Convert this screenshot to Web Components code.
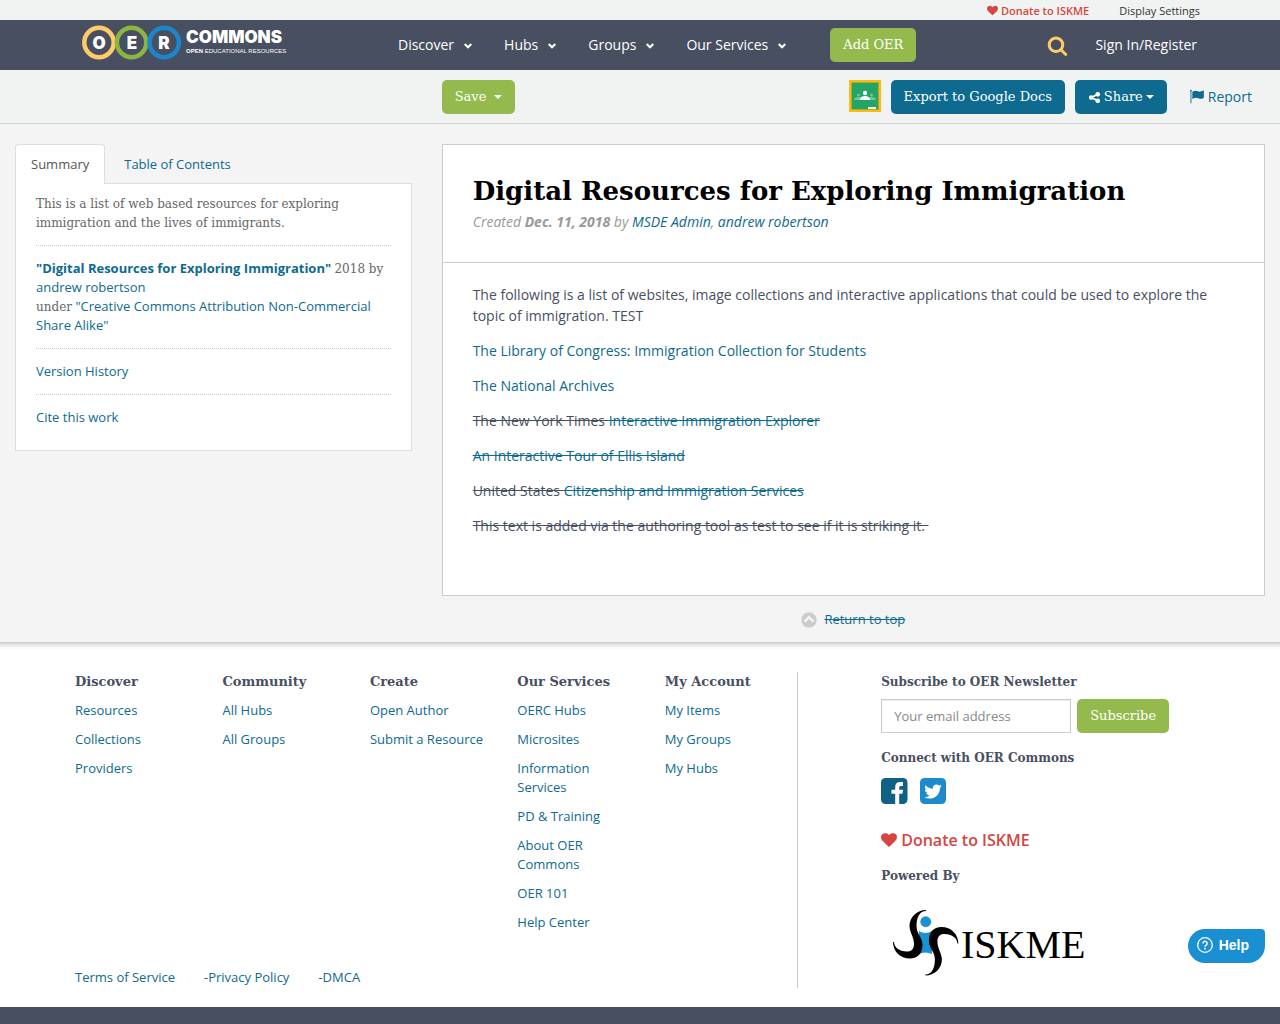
<!DOCTYPE html>
<html lang="en">
<head>
<meta charset="utf-8">
<meta name="viewport" content="width=device-width, initial-scale=1">
<title>Digital Resources for Exploring Immigration | OER Commons</title>
<style>
  :root {
    --slab: "DejaVu Serif", serif;
    --link: #0e6a8e;
    --navy: #484f60;
    --green: #94ba4d;
    --blue: #0e6a8e;
    --red: #d64541;
  }
  body {
    margin: 0;
    min-height: 100vh;
    display: flex;
    flex-direction: column;
    background: #f4f4f4;
    color: var(--navy);
    font: 13px/19px "Open Sans", sans-serif;
  }
  a {
    color: var(--link);
    text-decoration: none;
  }
  main {
    display: grid;
    grid-template-columns: 1fr 2fr;
    align-items: start;
    padding-top: 20px;
  }
  oer-summary {
    margin: 0 15px;
  }
  .content {
    margin: 0 15px;
    padding-bottom: 13px;
  }
  .serif {
    font: 12px/14px var(--slab);
  }
  del {
    text-decoration: line-through;
  }
</style>
</head>
<body>
<oer-topbar></oer-topbar>
<oer-navbar></oer-navbar>
<oer-actions></oer-actions>

<main>
  <oer-summary>
    <oer-summary-item><span class="serif">This is a list of web based resources for exploring immigration and the lives of immigrants.</span></oer-summary-item>
    <oer-summary-item>
      <a href="#"><b>"Digital Resources for Exploring Immigration"</b></a> <span class="serif">2018 by</span><br>
      <a href="#">andrew robertson</a><br>
      <span class="serif">under</span> <a href="#">"Creative Commons Attribution Non-Commercial Share Alike"</a>
    </oer-summary-item>
    <oer-summary-item><a href="#">Version History</a></oer-summary-item>
    <oer-summary-item><a href="#">Cite this work</a></oer-summary-item>
  </oer-summary>

  <div class="content">
    <oer-article>
      <span slot="title">Digital Resources for Exploring Immigration</span>
      <span slot="meta">Created <b>Dec. 11, 2018</b> by <a href="#">MSDE Admin</a>, <a href="#">andrew robertson</a></span>
      <p>The following is a list of websites, image collections and interactive applications that could be used to explore the topic of immigration. TEST</p>
      <p><a href="#">The Library of Congress: Immigration Collection for Students</a></p>
      <p><a href="#">The National Archives</a></p>
      <p><del>The New York Times <a href="#"><del>Interactive Immigration Explorer</del></a></del></p>
      <p><a href="#"><del>An Interactive Tour of Ellis Island</del></a></p>
      <p><del>United States <a href="#"><del>Citizenship and Immigration Services</del></a></del></p>
      <p><del>This text is added via the authoring tool as test to see if it is striking it.&nbsp;</del></p>
    </oer-article>
    <oer-return-top></oer-return-top>
  </div>
</main>

<oer-footer>
  <oer-link-column heading="Discover">
    <a href="#">Resources</a><a href="#">Collections</a><a href="#">Providers</a>
  </oer-link-column>
  <oer-link-column heading="Community">
    <a href="#">All Hubs</a><a href="#">All Groups</a>
  </oer-link-column>
  <oer-link-column heading="Create">
    <a href="#">Open Author</a><a href="#">Submit a Resource</a>
  </oer-link-column>
  <oer-link-column heading="Our Services">
    <a href="#">OERC Hubs</a><a href="#">Microsites</a><a href="#">Information Services</a><a href="#">PD &amp; Training</a><a href="#">About OER Commons</a><a href="#">OER 101</a><a href="#">Help Center</a>
  </oer-link-column>
  <oer-link-column heading="My Account">
    <a href="#">My Items</a><a href="#">My Groups</a><a href="#">My Hubs</a>
  </oer-link-column>
  <oer-newsletter slot="side"></oer-newsletter>
</oer-footer>
<oer-help></oer-help>

<script>
const base = `
  * { box-sizing: border-box; }
  :host { display: block; }
  a { color: var(--link); text-decoration: none; }
  svg { display: block; flex: none; }
  button { font: 13px/20px var(--slab); color: #fff; border: 0; border-radius: 5px; cursor: pointer; }
`

const icons = {
  heart: '<path d="M896 1664q-26 0-44-18l-624-602q-10-8-27.5-26T145 952.5 77 855 23.5 734 0 596q0-220 127-344t351-124q62 0 126.5 21.5t120 58T820 276t76 68q36-36 76-68t95.5-68.5 120-58T1314 128q224 0 351 124t127 344q0 221-229 450l-623 600q-18 18-44 18z"/>',
  search: '<path d="M1216 832q0-185-131.5-316.5T768 384 451.5 515.5 320 832t131.5 316.5T768 1280t316.5-131.5T1216 832zm512 832q0 52-38 90t-90 38q-54 0-90-38l-343-342q-179 124-399 124-143 0-273.5-55.5t-225-150-150-225T64 832t55.5-273.5 150-225 225-150T768 128t273.5 55.5 225 150 150 225T1472 832q0 220-124 399l343 343q37 37 37 90z"/>',
  share: '<path d="M1344 1024q133 0 226.5 93.5t93.5 226.5-93.5 226.5-226.5 93.5-226.5-93.5-93.5-226.5q0-12 2-34l-360-180q-92 86-218 86-133 0-226.5-93.5t-93.5-226.5 93.5-226.5 226.5-93.5q126 0 218 86l360-180q-2-22-2-34 0-133 93.5-226.5t226.5-93.5 226.5 93.5 93.5 226.5-93.5 226.5-226.5 93.5q-126 0-218-86l-360 180q2 22 2 34t-2 34l360 180q92-86 218-86z"/>',
  flag: '<path d="M0 190a110 110 0 0 1 220 0q0 65-52 95v1400q0 43-55 43t-55-43V285Q0 255 0 190zM280 330q180-130 400-130c190 0 290 120 480 120 150 0 260-60 420-140q75-35 75 50v780q0 40-40 62-190 104-370 104c-220 0-330-120-540-120q-190 0-360 115-65 35-65-35z"/>',
  twitter: '<path d="M1408 610q-56 25-121 34 68-40 93-117-65 38-134 51-61-66-153-66-87 0-148.5 61.5t-61.5 148.5q0 29 5 48-129-7-242-65t-192-155q-29 50-29 106 0 114 91 175-47-1-100-26v2q0 75 50 133.5t123 72.5q-29 8-51 8-13 0-39-4 21 63 74.5 104t121.5 42q-116 90-261 90-26 0-50-3 148 94 322 94 112 0 210-35.5t168-95 120.5-137 75-162 24.5-168.5q0-18-1-27 63-45 105-109z"/>'
}

const icon = (name, size) =>
  `<svg width="${size}" height="${size}" viewBox="0 0 1792 1792" fill="currentColor" aria-hidden="true">${icons[name]}</svg>`

const caret = '<svg width="8" height="4" viewBox="0 0 8 4" fill="currentColor" aria-hidden="true"><path d="M0 0h8L4 4z"/></svg>'
const chevron = '<svg width="8" height="6" viewBox="0 0 8 6" fill="none" stroke="currentColor" stroke-width="2" aria-hidden="true"><path d="M.7 1 4 4.3 7.3 1"/></svg>'

function define(name, html, setup) {
  const template = document.createElement('template')
  template.innerHTML = html
  customElements.define(name, class extends HTMLElement {
    constructor() {
      super()
      this.attachShadow({ mode: 'open' }).append(template.content.cloneNode(true))
    }

    connectedCallback() {
      if (setup) setup(this)
    }
  })
}

define('oer-topbar', `
  <style>
    ${base}
    :host { background: #f0f3f2; }
    nav {
      max-width: 1120px;
      height: 20px;
      margin: 0 auto;
      display: flex;
      justify-content: flex-end;
      align-items: center;
      gap: 30px;
      font-size: 11px;
    }
    a { display: flex; align-items: center; gap: 3px; color: #333; }
    .donate { color: var(--red); font-weight: 600; }
  </style>
  <nav>
    <a class="donate" href="#">${icon('heart', 11)}Donate to ISKME</a>
    <a href="#">Display Settings</a>
  </nav>
`)

define('oer-logo', `
  <style>
    ${base}
    svg { overflow: visible; }
    text { fill: #fff; font-family: Inter, sans-serif; font-weight: 900; }
    .small { font-family: "Liberation Sans", sans-serif; font-weight: 400; font-size: 6px; }
    .small .strong { font-weight: 700; }
  </style>
  <svg width="204" height="36" viewBox="0 0 204 36" role="img" aria-label="OER Commons">
    <g fill="none" stroke-width="4.500">
      <circle cx="17" cy="17.500" r="14.700" stroke="#fdcb67"/>
      <circle cx="49.600" cy="17.500" r="14.700" stroke="#8db543"/>
      <circle cx="82.200" cy="17.500" r="14.700" stroke="#1c85cb"/>
    </g>
    <g font-size="17" text-anchor="middle">
      <text x="17" y="24">O</text>
      <text x="50" y="24">E</text>
      <text x="82" y="24">R</text>
    </g>
    <text x="104" y="18" font-size="17">COMMONS</text>
    <text class="small" x="104" y="28"><tspan class="strong">OPEN</tspan> EDUCATIONAL RESOURCES</text>
  </svg>
`)

define('oer-navbar', `
  <style>
    ${base}
    :host { background: var(--navy); color: #fff; font-size: 14px; }
    .bar {
      max-width: 1116px;
      height: 50px;
      margin: 0 auto;
      display: flex;
      align-items: center;
    }
    nav { display: flex; gap: 32px; margin: 0 44px 0 112px; }
    a { display: flex; align-items: center; gap: 10px; padding-bottom: 2px; color: #fff; }
    nav svg { margin-top: 3px; }
    .logo { padding-bottom: 4px; }
    .add { padding: 7px 13px; background: var(--green); }
    .search { margin-left: auto; color: #fdcb67; background: none; padding: 0; }
    .sign { margin: 0 1px 0 27px; }
  </style>
  <div class="bar">
    <a class="logo" href="#"><oer-logo></oer-logo></a>
    <nav>
      <a href="#">Discover ${chevron}</a>
      <a href="#">Hubs ${chevron}</a>
      <a href="#">Groups ${chevron}</a>
      <a href="#">Our Services ${chevron}</a>
    </nav>
    <button class="add">Add OER</button>
    <button class="search" aria-label="Search">${icon('search', 21)}</button>
    <a class="sign" href="#">Sign In/Register</a>
  </div>
`)

define('oer-actions', `
  <style>
    ${base}
    :host {
      display: grid;
      grid-template-columns: 1fr 2fr;
      background: #f0f3f2;
      border-bottom: 1px solid #d0d3d2;
    }
    .tools {
      grid-column: 2;
      margin: 0 15px;
      padding: 10px 13px 9px 0;
      display: flex;
      align-items: flex-start;
      gap: 10px;
    }
    button { display: flex; align-items: center; height: 34px; padding: 0 13px; background: var(--blue); }
    .save { gap: 8px; background: var(--green); margin-right: auto; }
    .share { gap: 3px; }
    .report { display: flex; align-items: center; gap: 3px; height: 33px; margin-left: 13px; font-size: 14px; }
  </style>
  <div class="tools">
    <button class="save">Save ${caret}</button>
    <a href="#" aria-label="Share to Google Classroom">
      <svg width="32" height="32" viewBox="0 0 32 32">
        <path fill="#fbbc11" d="M0 0h32v32H0z"/>
        <path fill="#b6a52c" d="M2 2h28v28H2z"/>
        <path fill="#23a566" d="M3 3h26v26H3z"/>
        <g fill="#73c69c">
          <circle cx="9.500" cy="15" r="1.500"/>
          <circle cx="22.500" cy="15" r="1.500"/>
          <path d="M5 20v-1q1-2 4.500-2T14 19v1zM18 20v-1q1-2 4.500-2t4.500 2v1z"/>
        </g>
        <circle cx="16" cy="13" r="2.200" fill="#fff"/>
        <path fill="#fff" d="M11 20v-1q1-3 5-3t5 3v1z"/>
        <path fill="#eef0ee" d="M19 27h8v2h-8z"/>
      </svg>
    </a>
    <button>Export to Google Docs</button>
    <button class="share">${icon('share', 13)}Share ${caret}</button>
    <a class="report" href="#">${icon('flag', 15)}Report</a>
  </div>
`)

define('oer-summary', `
  <style>
    ${base}
    :host { color: #666; }
    [role=tablist] { display: flex; gap: 3px; }
    [role=tab] {
      padding: 10px 15px;
      height: 40px;
      font: inherit;
      color: var(--link);
      background: none;
      border: 1px solid transparent;
      border-bottom: 0;
      border-radius: 4px 4px 0 0;
      margin-bottom: -1px;
    }
    [aria-selected=true] { background: #fff; color: #555; border-color: #ddd; }
    .panel { background: #fff; border: 1px solid #ddd; padding: 0 20px 10px; }
    ::slotted(:first-child) { padding-top: 10px; }
    ::slotted(:last-child) { border-bottom: 0; }
  </style>
  <div role="tablist">
    <button role="tab" id="summary" aria-selected="true">Summary</button>
    <button role="tab" aria-selected="false">Table of Contents</button>
  </div>
  <div class="panel" role="tabpanel" aria-labelledby="summary"><slot></slot></div>
`)

define('oer-summary-item', `
  <style>
    :host { display: block; padding: 13px 0; border-bottom: 1px dotted #ccc; }
  </style>
  <slot></slot>
`)

define('oer-article', `
  <style>
    ${base}
    :host { background: #fff; border: 1px solid #ccc; }
    header { padding: 26px 30px 29px; border-bottom: 1px solid #ccc; }
    h1 { margin: 0; font: bold 26px/40px var(--slab); color: #000; }
    .meta { font-size: 14px; line-height: 22px; font-style: italic; color: #999; }
    .body { padding: 21px 30px 45px; font-size: 14px; line-height: 21px; }
    ::slotted(p) { margin: 0 0 14px; }
  </style>
  <header>
    <h1><slot name="title"></slot></h1>
    <div class="meta"><slot name="meta"></slot></div>
  </header>
  <div class="body"><slot></slot></div>
`)

define('oer-return-top', `
  <style>
    ${base}
    a { display: flex; justify-content: center; align-items: center; gap: 7px; padding-top: 14px; }
    span { text-decoration: line-through; }
  </style>
  <a href="#">
    <svg width="16" height="16" viewBox="0 0 16 16">
      <circle cx="8" cy="8" r="7.700" fill="#ccc"/>
      <path d="m3.500 9.700 4.500-4.500 4.500 4.500" fill="none" stroke="#f4f4f4" stroke-width="2.400"/>
    </svg>
    <span>Return to top</span>
  </a>
`)

define('oer-link-column', `
  <style>
    ${base}
    h2 { margin: 0 0 9px; font: bold 13px/20px var(--slab); }
    .links { display: flex; flex-direction: column; align-items: flex-start; gap: 10px; padding-right: 30px; }
  </style>
  <h2></h2>
  <div class="links"><slot></slot></div>
`, (el) => {
  el.shadowRoot.querySelector('h2').textContent = el.getAttribute('heading')
})

define('oer-newsletter', `
  <style>
    ${base}
    h2 { margin: 0; font: bold 12px/20px var(--slab); }
    form { display: flex; gap: 6px; margin: 7px 0 15px; }
    input {
      width: 190px;
      height: 34px;
      padding: 0 12px;
      font: inherit;
      border: 1px solid #ccc;
      box-shadow: inset 0 1px 1px rgba(0, 0, 0, .08);
    }
    input::placeholder { color: #888; }
    button { padding: 0 13px; background: var(--green); }
    .social { display: flex; gap: 12px; margin: 10px 0 24px; }
    .donate {
      display: flex;
      align-items: center;
      gap: 4px;
      margin-bottom: 14px;
      font-size: 16px;
      line-height: 24px;
      font-weight: 600;
      color: var(--red);
    }
    .iskme { display: block; margin: 22px 0 0 11px; }
    text { font-family: "Liberation Serif", serif; font-size: 40px; }
  </style>
  <h2><label for="email">Subscribe to OER Newsletter</label></h2>
  <form>
    <input id="email" type="email" placeholder="Your email address">
    <button type="button">Subscribe</button>
  </form>
  <h2>Connect with OER Commons</h2>
  <div class="social">
    <a href="#" aria-label="Facebook">
      <svg width="27" height="26" viewBox="0 0 27 26">
        <rect width="26.500" height="26" rx="4.500" fill="#0f6186"/>
        <path fill="#fff" d="M14.200 26V15.800h-3.700v-4h3.700V9q0-5 5-5H22v4h-2.200q-1.600 0-1.600 1.700v2.100H22l-.5 4h-3.300V26z"/>
      </svg>
    </a>
    <a href="#" aria-label="Twitter">
      <svg width="26" height="26" viewBox="128 128 1536 1536">
        <rect x="128" y="128" width="1536" height="1536" rx="270" fill="#1f89cd"/>
        <g fill="#fff">${icons.twitter}</g>
      </svg>
    </a>
  </div>
  <a class="donate" href="#">${icon('heart', 16)}Donate to ISKME</a>
  <h2>Powered By</h2>
  <a class="iskme" href="#">
    <svg width="196" height="68" viewBox="0 0 196 68">
      <g transform="translate(1 1)">
        <path fill="#1793d3" d="M26 22q6.500 4 13 0v23q-6.500-3-13 0z"/>
        <circle cx="32.700" cy="12.700" r="5.400" fill="#1793d3"/>
        <path id="arm" d="M33 1C24 1 16.500 8 16.500 17c0 6 4.500 11 4.500 18 0 5-2.500 7.500-7 7.500C6 42.500 1 38 1 33H0c0 9 7 16.500 17 16.500 8 0 12.500-5.500 12.500-13.500 0-8-6-11-6-19 0-9 3.500-15 9.500-15z"/>
        <use href="#arm" transform="rotate(180 32.700 33.700)"/>
      </g>
      <text x="69" y="50">ISKME</text>
    </svg>
  </a>
`)

define('oer-footer', `
  <style>
    ${base}
    :host { flex: 1; display: flex; flex-direction: column; background: var(--navy); }
    .sheet {
      background: #fff;
      border-top: 1px solid #ccc;
      box-shadow: inset 0 7px 5px -5px rgba(0, 0, 0, .2);
      padding: 29px 0 19px;
    }
    .inner { max-width: 1130px; margin: 0 auto; display: flex; }
    .left {
      width: 64%;
      border-right: 1px solid #ccc;
      display: flex;
      flex-direction: column;
      justify-content: space-between;
    }
    .columns { display: grid; grid-template-columns: repeat(5, 1fr); margin-right: -15px; }
    .side { flex: 1; padding-left: 83px; }
    .legal { display: flex; gap: 29px; padding: 36px 0 1px; }
  </style>
  <div class="sheet">
    <div class="inner">
      <div class="left">
        <div class="columns"><slot></slot></div>
        <div class="legal">
          <a href="#">Terms of Service</a>
          <span>-<a href="#">Privacy Policy</a></span>
          <span>-<a href="#">DMCA</a></span>
        </div>
      </div>
      <div class="side"><slot name="side"></slot></div>
    </div>
  </div>
`)

define('oer-help', `
  <style>
    ${base}
    :host { position: fixed; right: 15px; bottom: 61px; }
    button {
      display: flex;
      align-items: center;
      gap: 6px;
      height: 34px;
      padding: 0 16px 2px 9px;
      font: bold 14px/20px "Liberation Sans", sans-serif;
      background: #1a8fd1;
      border-radius: 17px 4px 17px 17px;
    }
  </style>
  <button>
    <svg width="16" height="16" viewBox="0 0 16 16" fill="none" stroke="#fff">
      <circle cx="8" cy="8" r="7.300" stroke-width="1.300"/>
      <path d="M5.900 6.400a2.100 2.100 0 1 1 3.200 1.800Q8 8.800 8 9.800" stroke-width="1.500"/>
      <path d="M8 10.800v1.600" stroke-width="1.600"/>
    </svg>
    Help
  </button>
`)
</script>
</body>
</html>
